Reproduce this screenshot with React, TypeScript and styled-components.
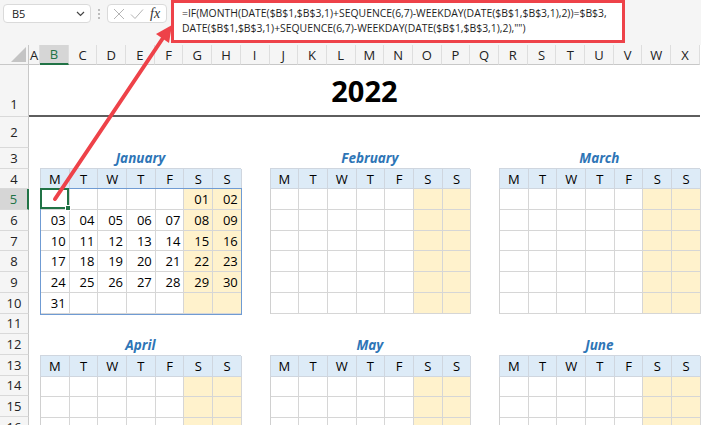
import React from 'react'
import styled, { createGlobalStyle, css } from 'styled-components'

const COL = 28.7
const ROW = 20.7
const GREEN = '#217346'

const GlobalStyle = createGlobalStyle`
  html, body {
    margin: 0;
    padding: 0;
    background: #ffffff;
    overflow: hidden;
  }
  body {
    font-family: 'Open Sans', 'Liberation Sans', sans-serif;
    color: #000;
  }
`

const Page = styled.div`
  position: relative;
  width: 701px;
  height: 425px;
  overflow: hidden;
  display: flex;
  flex-direction: column;
  background: #fff;
`

/* ---------- formula bar ---------- */

const FormulaBar = styled.div`
  flex: none;
  height: 45px;
  box-sizing: border-box;
  background: #f5f5f5;
  display: flex;
  align-items: flex-start;
  padding-left: 3px;
`

const NameBox = styled.div`
  margin-top: 4px;
  width: 88px;
  height: 19px;
  box-sizing: border-box;
  background: #fff;
  border: 1px solid #dadada;
  border-radius: 4px;
  display: flex;
  align-items: center;
  justify-content: space-between;
  padding: 0 5px 0 8px;
  font-size: 11px;
  color: #222;
`

const Grip = styled.div`
  margin: 9px 0 0 7px;
  width: 2px;
  display: flex;
  flex-direction: column;
  gap: 2px;
  & span {
    width: 2px;
    height: 2px;
    border-radius: 1px;
    background: #a8a8a8;
  }
`

const ActionBox = styled.div`
  margin: 4px 0 0 7px;
  width: 60px;
  height: 19px;
  box-sizing: border-box;
  background: #fff;
  border: 1px solid #dadada;
  border-radius: 4px;
  display: flex;
  align-items: center;
  padding: 0 3px 0 5px;
  gap: 5px;
`

const Fx = styled.span`
  font-family: 'Liberation Serif', 'DejaVu Serif', serif;
  font-style: italic;
  font-size: 14px;
  color: #333;
  margin-left: 1px;
  line-height: 1;
`

const FormulaBox = styled.div`
  margin-left: 4px;
  width: 454px;
  height: 43px;
  box-sizing: border-box;
  background: #fff;
  border: 3px solid #ee4249;
  padding: 3px 0 0 8px;
  font-size: 10.4px;
  line-height: 15px;
  color: #1e1e1e;
  white-space: pre;
`

/* ---------- sheet grid ---------- */

const Sheet = styled.div`
  display: grid;
  grid-template-columns: 29px 11px repeat(23, ${COL}px);
  grid-template-rows: 20px 52px 31px repeat(14, ${ROW}px);
`

const headerBase = css`
  box-sizing: border-box;
  background: #f5f5f5;
  display: flex;
  align-items: center;
  justify-content: center;
  font-size: 13px;
  color: #222;
`

const Corner = styled.div`
  ${headerBase};
  grid-row: 1;
  grid-column: 1;
  align-items: flex-end;
  justify-content: flex-end;
  padding: 0 2px 2px 0;
  border-right: 1px solid #c8c8c8;
  border-bottom: 1px solid #c8c8c8;
  &::after {
    content: '';
    width: 0;
    height: 0;
    border-left: 15px solid transparent;
    border-bottom: 15px solid #c4c4c4;
  }
`

const ColHeader = styled.div<{ $selected?: boolean }>`
  ${headerBase};
  grid-row: 1;
  border-right: 1px solid #dedede;
  border-bottom: 1px solid #c8c8c8;
  ${({ $selected }) =>
    $selected &&
    css`
      background: #d6d6d6;
      color: ${GREEN};
      border-bottom: 2px solid ${GREEN};
    `}
`

const RowHeader = styled.div<{ $selected?: boolean; $tall?: boolean }>`
  ${headerBase};
  grid-column: 1;
  align-items: ${({ $tall }) => ($tall ? 'flex-end' : 'center')};
  padding-bottom: ${({ $tall }) => ($tall ? '3px' : '0')};
  border-right: 1px solid #c8c8c8;
  border-bottom: 1px solid #d9d9d9;
  ${({ $selected }) =>
    $selected &&
    css`
      background: #d6d6d6;
      color: ${GREEN};
      border-right: 2px solid ${GREEN};
    `}
`

const YearTitle = styled.div`
  grid-row: 2;
  grid-column: 2 / -1;
  box-sizing: border-box;
  border-bottom: 2px solid #5e5e5e;
  display: flex;
  align-items: center;
  justify-content: center;
  font-size: 29px;
  font-weight: 700;
  padding-top: 1px;
`

/* ---------- month calendars ---------- */

const MonthBlock = styled.div<{ $col: number; $row: number }>`
  grid-column: ${({ $col }) => `${$col} / span 7`};
  grid-row: ${({ $row }) => `${$row} / span 8`};
  display: flex;
  flex-direction: column;
`

const MonthTitle = styled.div`
  height: ${ROW}px;
  display: flex;
  align-items: center;
  justify-content: center;
  font-size: 13.5px;
  font-weight: 700;
  font-style: italic;
  color: #2e75b6;
`

const WeekRow = styled.div`
  display: grid;
  grid-template-columns: repeat(7, ${COL}px);
  grid-auto-rows: ${ROW}px;
  border-left: 1px solid #cfd6df;
  border-top: 1px solid #cfd6df;
`

const DayName = styled.div`
  box-sizing: border-box;
  background: #ddebf7;
  border-right: 1px solid #cfd6df;
  border-bottom: 1px solid #cfd6df;
  display: flex;
  align-items: center;
  justify-content: center;
  font-size: 13px;
`

const Days = styled.div<{ $spill?: boolean }>`
  position: relative;
  display: grid;
  grid-template-columns: repeat(7, ${COL}px);
  grid-auto-rows: ${ROW}px;
  border-left: 1px solid #d0d0d0;
  ${({ $spill }) =>
    $spill &&
    css`
      &::after {
        content: '';
        position: absolute;
        inset: -1px;
        border: 1px solid #6f9bd3;
        pointer-events: none;
      }
    `}
`

const DayCell = styled.div<{ $weekend?: boolean }>`
  position: relative;
  box-sizing: border-box;
  background: ${({ $weekend }) => ($weekend ? '#fff2cc' : '#fff')};
  border-right: 1px solid #d6d6d6;
  border-bottom: 1px solid #d6d6d6;
  display: flex;
  align-items: center;
  justify-content: flex-end;
  padding-right: 3px;
  font-size: 13px;
`

const Selection = styled.div`
  position: absolute;
  inset: -1px 0 0 -1px;
  border: 2px solid ${GREEN};
  z-index: 2;
  &::after {
    content: '';
    position: absolute;
    right: -4px;
    bottom: -4px;
    width: 4px;
    height: 4px;
    background: ${GREEN};
    border: 1px solid #fff;
  }
`

const Annotation = styled.svg`
  position: absolute;
  top: 0;
  left: 0;
  pointer-events: none;
  z-index: 5;
`

const LETTERS = 'ABCDEFGHIJKLMNOPQRSTUVWX'.split('')
const DAY_NAMES = ['M', 'T', 'W', 'T', 'F', 'S', 'S']
const MONTHS = ['January', 'February', 'March', 'April', 'May', 'June']
const ROWS = Array.from({ length: 16 }, (_, i) => i + 1)

// Jan 1st 2022 is a Saturday (Monday-first week)
const janDays = Array.from({ length: 42 }, (_, i) => {
  const d = i - 4
  return d >= 1 && d <= 31 ? String(d).padStart(2, '0') : ''
})

const Month: React.FC<{ name: string; index: number }> = ({ name, index }) => {
  const col = 3 + (index % 3) * 8
  const row = index < 3 ? 4 : 13
  const filled = index === 0
  return (
    <MonthBlock $col={col} $row={row}>
      <MonthTitle>{name}</MonthTitle>
      <WeekRow>
        {DAY_NAMES.map((d, i) => (
          <DayName key={i}>{d}</DayName>
        ))}
      </WeekRow>
      <Days $spill={filled}>
        {Array.from({ length: 42 }, (_, i) => (
          <DayCell key={i} $weekend={i % 7 >= 5}>
            {filled ? janDays[i] : ''}
            {filled && i === 0 && <Selection />}
          </DayCell>
        ))}
      </Days>
    </MonthBlock>
  )
}

export default function App() {
  return (
    <Page>
      <GlobalStyle />
      <FormulaBar>
        <NameBox>
          <span>B5</span>
          <svg width="9" height="6" viewBox="0 0 9 6">
            <polyline points="1,1 4.5,4.5 8,1" fill="none" stroke="#444" strokeWidth="1.2" />
          </svg>
        </NameBox>
        <Grip>
          <span />
          <span />
          <span />
        </Grip>
        <ActionBox>
          <svg width="12" height="12" viewBox="0 0 12 12">
            <path d="M1 1 L11 11 M11 1 L1 11" stroke="#b4b4b4" strokeWidth="1" fill="none" />
          </svg>
          <svg width="14" height="12" viewBox="0 0 14 12">
            <path d="M1 6.5 L5 10.5 L13 1.5" stroke="#b4b4b4" strokeWidth="1" fill="none" />
          </svg>
          <Fx>fx</Fx>
        </ActionBox>
        <FormulaBox>
          {'=IF(MONTH(DATE($B$1,$B$3,1)+SEQUENCE(6,7)-WEEKDAY(DATE($B$1,$B$3,1),2))=$B$3,\nDATE($B$1,$B$3,1)+SEQUENCE(6,7)-WEEKDAY(DATE($B$1,$B$3,1),2),"")'}
        </FormulaBox>
      </FormulaBar>

      <Sheet>
        <Corner />
        {LETTERS.map((l) => (
          <ColHeader key={l} $selected={l === 'B'}>
            {l}
          </ColHeader>
        ))}
        {ROWS.map((n) => (
          <RowHeader key={n} $selected={n === 5} $tall={n === 1}>
            {n}
          </RowHeader>
        ))}
        <YearTitle>2022</YearTitle>
        {MONTHS.map((m, i) => (
          <Month key={m} name={m} index={i} />
        ))}
      </Sheet>

      <Annotation width="701" height="425" viewBox="0 0 701 425">
        <line x1="55" y1="199" x2="163" y2="38" stroke="#ee4249" strokeWidth="4" strokeLinecap="round" />
        <polygon points="172,25 169,43 156,34" fill="#ee4249" />
      </Annotation>
    </Page>
  )
}
